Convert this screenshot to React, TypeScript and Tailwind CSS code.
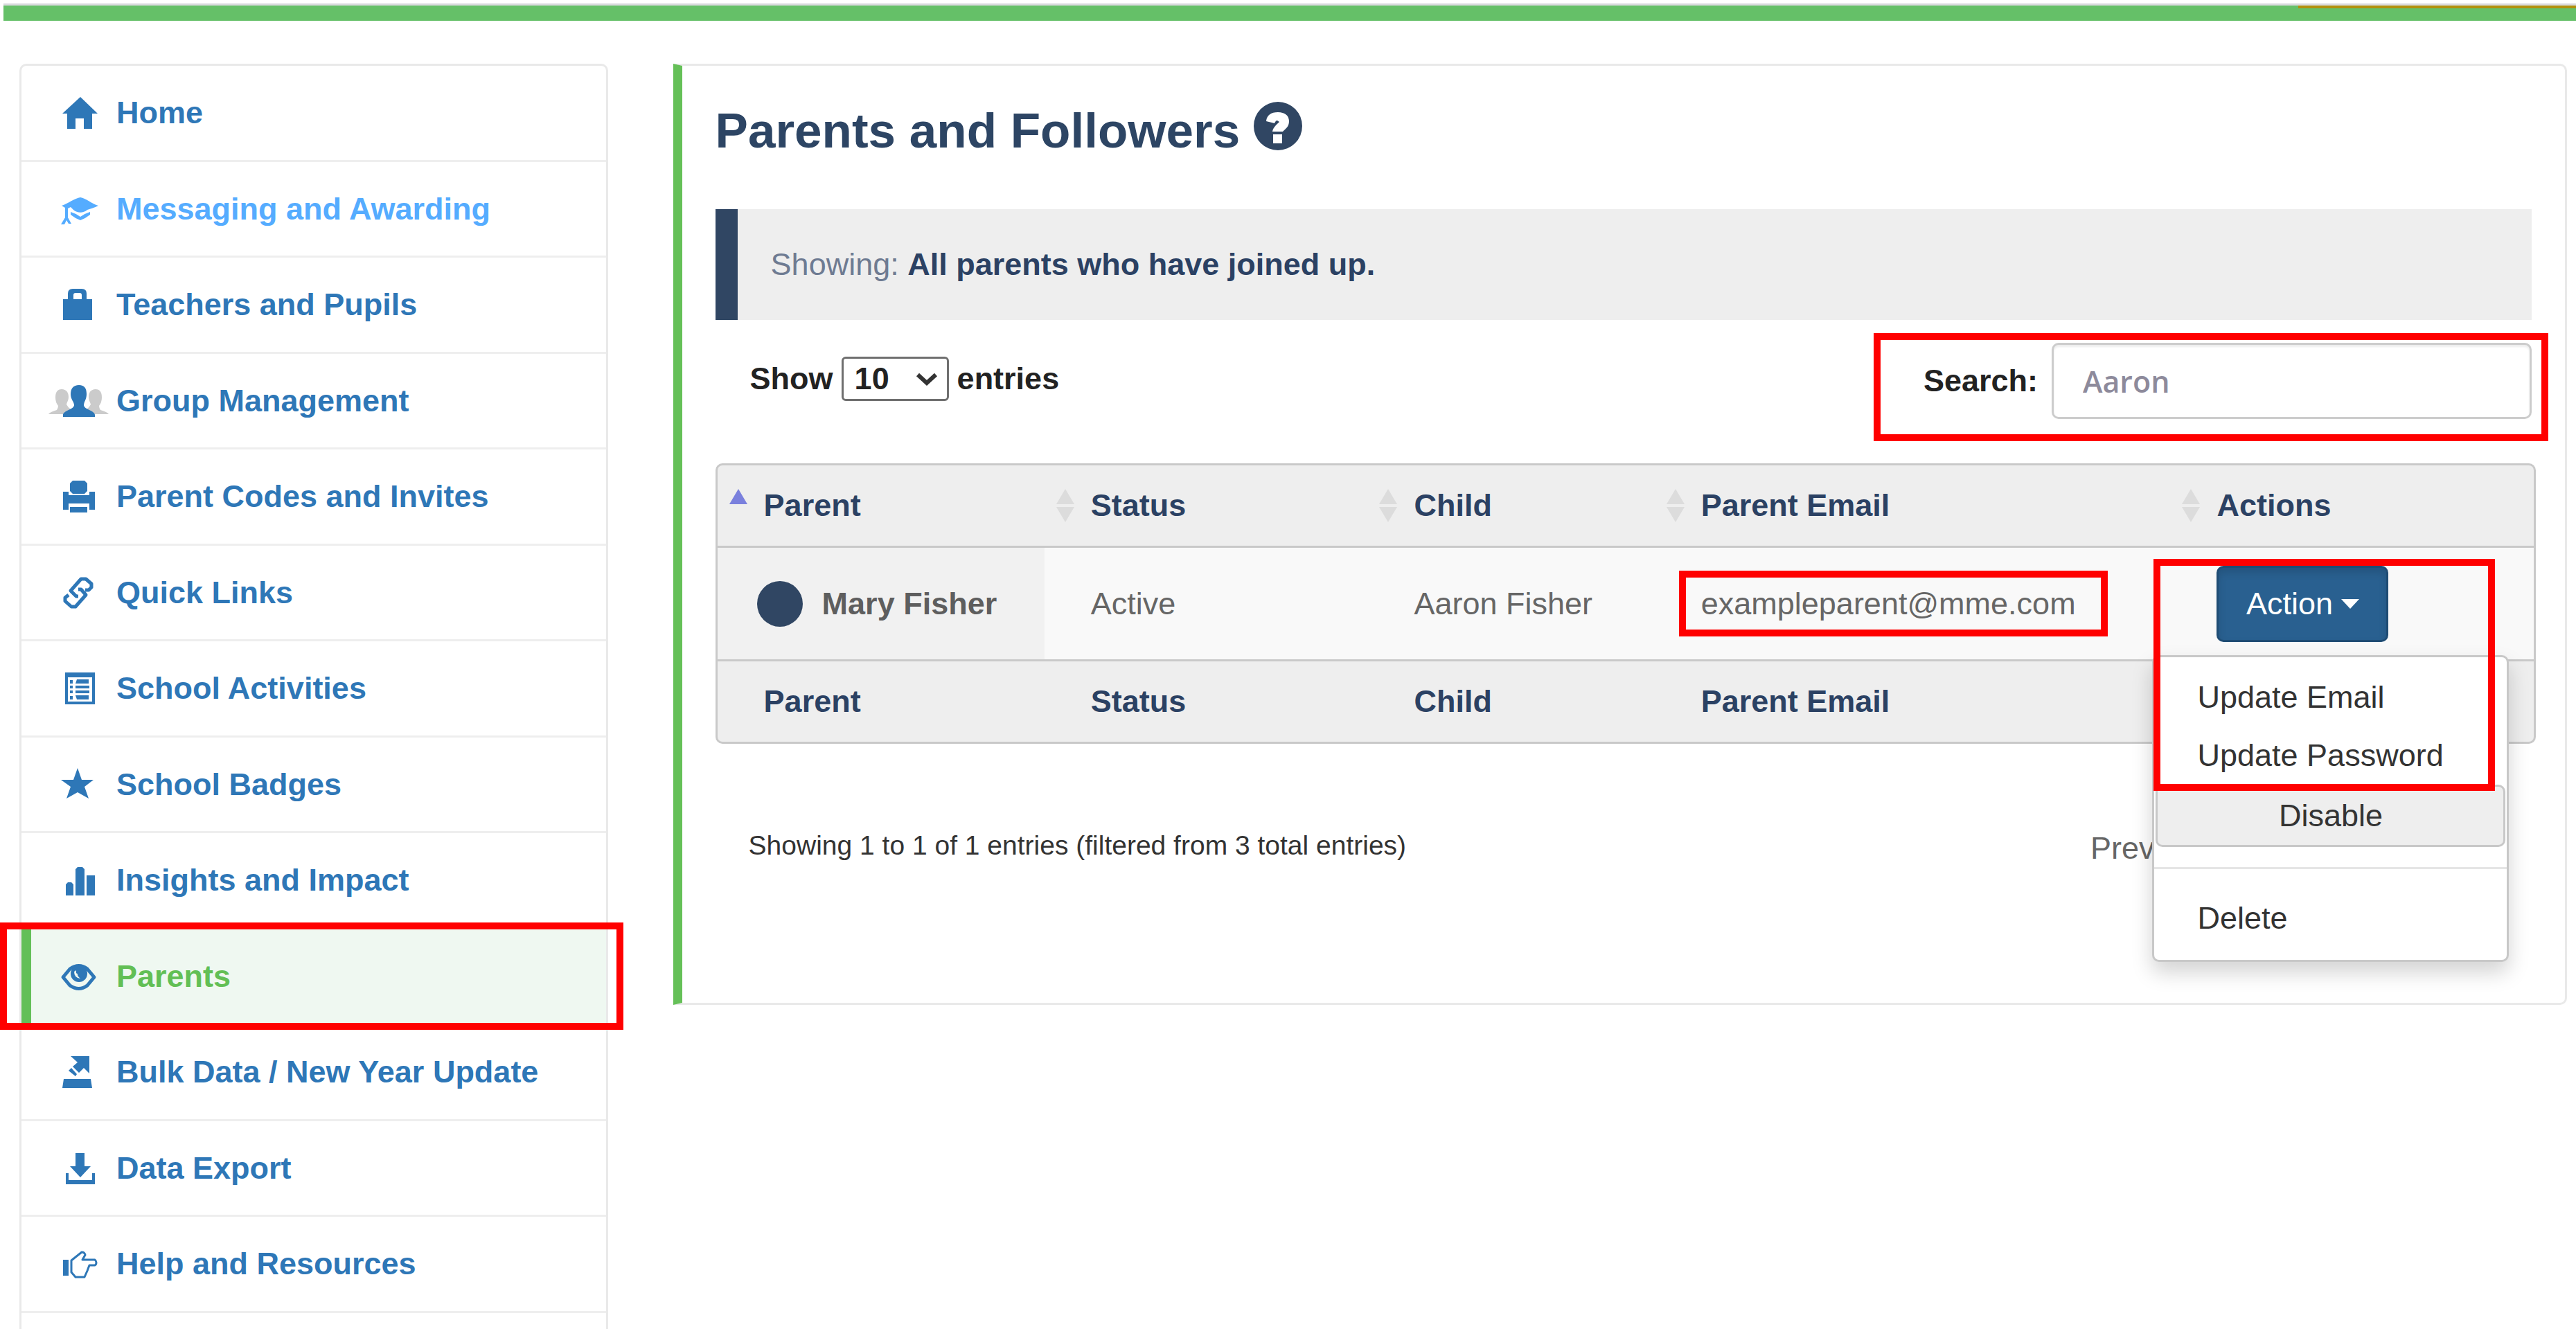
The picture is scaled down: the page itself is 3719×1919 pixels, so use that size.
import type { ReactNode } from "react";

function NavIcon({ children }: { children: ReactNode }) {
  return (
    <svg viewBox="0 0 100 60" className="h-[60px] w-[100px] shrink-0" fill="currentColor" aria-hidden="true">
      {children}
    </svg>
  );
}

const icons = {
  home: <path d="M56 7 81 31H73V53H61V38H49V53H37V31H30Z" />,
  cap: (
    <>
      <path d="M29 25C38 22 48 14 56 13 64 14 72 22 82 25 76 28 71 29 66 31 60 36 52 36 46 31L42 27 38 29V42L43 51H39L36 46 33 52H28L34 42V28Z" />
      <path d="M42 34Q49 36 56 41 63 36 70 34V38Q64 43 56 46 48 43 42 38Z" />
    </>
  ),
  lock: (
    <path
      fillRule="evenodd"
      d="M31 22H38V14Q38 7 45 7H58Q65 7 65 14V22H73V52H31ZM46 22H58V16Q58 13 55 13H49Q46 13 46 16Z"
    />
  ),
  group: (
    <>
      <g fill="#cbcbcb">
        <path d="M29 13C36 13 39 18 39 24 39 29 37 31 36 35Q38 39 42 42L31 49H10Q12 46 22 43 24 40 24 37 20 32 20 25 20 13 29 13Z" />
        <path d="M78 13C71 13 68 18 68 24 68 29 70 31 71 35Q69 39 65 42L76 49H97Q95 46 85 43 83 40 83 37 87 32 87 25 87 13 78 13Z" />
      </g>
      <path d="M54 7C62 7 65 12 65 20 65 28 61 31 61 36 61 42 77 44 77 50V53H31V50C31 44 47 42 47 36 47 31 42 28 42 20 42 12 46 7 54 7Z" />
    </>
  ),
  print: (
    <path d="M45 7H62L66 11V22L62 26H45L41 22V11ZM31 23H39V28H69V23H77V49H69V40H39V49H31ZM41 45H66V53H41Z" />
  ),
  link: (
    <g fill="none" stroke="currentColor" strokeWidth="5" strokeLinejoin="round">
      <path d="M53 35H50L42 27 57 10H64L72 17V22L68 26H63" />
      <path d="M53 25H57L64 33 49 50H43L34 42V37L39 33" />
    </g>
  ),
  list: (
    <path
      fillRule="evenodd"
      d="M34 7H77V53H34ZM38 14V49H73V14ZM41 18H45V23H41ZM41 26H45V30H41ZM41 33H45V37H41ZM41 41H45V46H41ZM51 17H68V23H49ZM49 26H69V30H49ZM49 33H69V37H49ZM49 40H68V46H51Z"
    />
  ),
  star: <path d="M52 6 58 23H75L62 33 68 50 52 41 36 50 42 33 28 23H46Z" />,
  bars: <path d="M38 33H43L46 36V52H35V36ZM52 11H59L62 14V52H49V14ZM65 23H77V52H65Z" />,
  eye: (
    <>
      <path
        d="M31 31 41 19Q54 10 66 19L76 31 66 43Q54 52 41 43Z"
        fill="none"
        stroke="currentColor"
        strokeWidth="5"
        strokeLinejoin="round"
      />
      <circle cx="54" cy="26" r="12" />
      <path d="M47 23Q47 32 56 33 51 29 52 26 49 26 50 21Z" fill="#f0f8f1" />
    </>
  ),
  bulk: <path d="M42 7H69V32L61 24 54 31 45 22 52 16ZM43 24 51 33 49 36 39 28ZM32 40H71L73 53H30Z" />,
  download: <path d="M49 8H62V27H71L56 43 41 27H49ZM35 37H39V47H73V37H77V53H35Z" />,
  hand: (
    <>
      <path d="M31 24H39V47H31Z" />
      <path
        d="M43 25 58 13Q62 13 63 17L59 24H77Q79 26 79 28 79 31 77 32H69L66 40 62 49H49L43 42Z"
        fill="none"
        stroke="currentColor"
        strokeWidth="3"
        strokeLinejoin="round"
      />
    </>
  ),
};

const navItems: { label: string; icon: ReactNode; state?: "light" | "active" }[] = [
  { label: "Home", icon: icons.home },
  { label: "Messaging and Awarding", icon: icons.cap, state: "light" },
  { label: "Teachers and Pupils", icon: icons.lock },
  { label: "Group Management", icon: icons.group },
  { label: "Parent Codes and Invites", icon: icons.print },
  { label: "Quick Links", icon: icons.link },
  { label: "School Activities", icon: icons.list },
  { label: "School Badges", icon: icons.star },
  { label: "Insights and Impact", icon: icons.bars },
  { label: "Parents", icon: icons.eye, state: "active" },
  { label: "Bulk Data / New Year Update", icon: icons.bulk },
  { label: "Data Export", icon: icons.download },
  { label: "Help and Resources", icon: icons.hand },
];

function Sidebar() {
  return (
    <nav className="w-[23.1%] shrink-0 rounded-t-[10px] border-3 border-b-0 border-[#e9e9e9]">
      <ul>
        {navItems.map(({ label, icon, state }) => (
          <li key={label} className="relative border-b-3 border-[#eeeeee] odd:h-[139px] even:h-[138px]">
            <a
              href="#"
              className={
                "flex h-full items-center pl-[29px] text-[45px] leading-[48px] font-bold whitespace-nowrap " +
                (state === "light" ? "text-[#55acff]" : "text-[#2e77b7]") +
                (state === "active" ? " bg-[#eff8f1] shadow-[inset_14px_0_0_#63bf58]" : "")
              }
            >
              <NavIcon>{icon}</NavIcon>
              <span className={state === "active" ? "pl-2 text-[#62bf55]" : "pl-2"}>{label}</span>
            </a>
            {state === "active" && (
              <div className="pointer-events-none absolute -inset-y-[10px] -right-[25px] -left-[31px] border-10 border-[#ff0000]" />
            )}
          </li>
        ))}
      </ul>
    </nav>
  );
}

function SortArrows({ ascending = false }: { ascending?: boolean }) {
  return (
    <svg viewBox="0 0 26 48" className="h-[48px] w-[26px]" aria-hidden="true">
      <path d="M13 0 26 22H0Z" fill={ascending ? "#7a80dd" : "#dcdcdc"} />
      {!ascending && <path d="M13 48 26 26H0Z" fill="#dcdcdc" />}
    </svg>
  );
}

function ActionMenu() {
  return (
    <div className="relative w-[248px]">
      <button
        type="button"
        className="flex h-[110px] w-full items-center justify-center gap-3 rounded-[10px] border-3 border-[#1f4c74] bg-[#296090] text-white shadow-[inset_0_7px_12px_rgba(0,0,0,0.125)]"
      >
        Action
        <svg viewBox="0 0 26 14" className="h-[14px] w-[26px]" fill="currentColor" aria-hidden="true">
          <path d="M0 0H26L13 14Z" />
        </svg>
      </button>
      <div className="absolute top-[129px] -left-[93px] z-10 flex w-[515px] flex-col rounded-[10px] border-3 border-[#c8c8c8] bg-white pt-4 pb-[18px] text-[#333333] shadow-[0_15px_30px_rgba(0,0,0,0.175)]">
        <button type="button" className="h-[84px] pl-[62px] text-left">Update Email</button>
        <button type="button" className="h-[84px] pl-[62px] text-left">Update Password</button>
        <button type="button" className="mx-0.5 h-[90px] rounded-[10px] border-3 border-[#c8c8c8] bg-[#eeeeee]">
          Disable
        </button>
        <hr className="my-[29px] border-t-3 border-[#e5e5e5]" />
        <button type="button" className="h-[84px] pl-[62px] text-left">Delete</button>
      </div>
      <div className="pointer-events-none absolute -top-[10px] -left-[91px] z-20 h-[335px] w-[493px] border-10 border-[#ff0000]" />
    </div>
  );
}

const columns = [
  { label: "Parent", width: "w-[18%]" },
  { label: "Status", width: "w-[17.8%]" },
  { label: "Child", width: "w-[15.8%]" },
  { label: "Parent Email", width: "w-[28.4%]" },
  { label: "Actions", width: "w-[20%]" },
];

function ParentsTable() {
  return (
    <div className="mt-16 rounded-[10px] border-3 border-[#c9c9c9] bg-[#eeeeee]">
      <table className="w-full table-fixed border-separate border-spacing-0 text-left text-[#666666]">
        <thead className="text-[#2b4163]">
          <tr>
            {columns.map(({ label, width }, i) => (
              <th key={label} scope="col" className={`${width} h-[119px] border-b-3 border-[#c9c9c9] pl-[17px]`}>
                <button type="button" className="flex items-center gap-6">
                  <SortArrows ascending={i === 0} />
                  {label}
                </button>
              </th>
            ))}
          </tr>
        </thead>
        <tbody>
          <tr className="bg-[#f9f9f9]">
            <td className="h-[164px] border-b-3 border-[#c9c9c9] bg-[#f1f1f1] pl-[57px]">
              <div className="flex items-center gap-7 font-bold text-[#5e5e5e]">
                <span className="size-[66px] rounded-full bg-[#304663]" />
                Mary Fisher
              </div>
            </td>
            <td className="border-b-3 border-[#c9c9c9] pl-[67px]">Active</td>
            <td className="border-b-3 border-[#c9c9c9] pl-[67px]">Aaron Fisher</td>
            <td className="border-b-3 border-[#c9c9c9] pl-[67px]">
              <span className="relative">
                exampleparent@mme.com
                <span className="pointer-events-none absolute -inset-y-[22px] -right-[46px] -left-[32px] border-10 border-[#ff0000]" />
              </span>
            </td>
            <td className="border-b-3 border-[#c9c9c9] pl-[67px]">
              <ActionMenu />
            </td>
          </tr>
        </tbody>
        <tfoot className="text-[#2b4163]">
          <tr>
            {columns.slice(0, 4).map(({ label }) => (
              <th key={label} scope="col" className="h-[116px] pl-[67px]">
                {label}
              </th>
            ))}
            <td />
          </tr>
        </tfoot>
      </table>
    </div>
  );
}

function Toolbar() {
  return (
    <div className="mt-[33px] mr-1.5 flex items-start justify-between font-bold text-[#222222]">
      <div className="flex items-center gap-3 pt-5 pl-[50px]">
        <label htmlFor="page-size">Show</label>
        <div className="relative">
          <select
            id="page-size"
            defaultValue="10"
            className="h-[64px] w-[155px] appearance-none rounded-[6px] border-3 border-[#6f6f6f] bg-white pl-4 font-bold"
          >
            <option>10</option>
          </select>
          <svg
            viewBox="0 0 32 20"
            className="pointer-events-none absolute top-[23px] right-[16px] h-[20px] w-[32px]"
            fill="none"
            stroke="#333333"
            strokeWidth="6"
            aria-hidden="true"
          >
            <path d="M3 3 16 15 29 3" />
          </svg>
        </div>
        <label htmlFor="page-size">entries</label>
      </div>
      <div className="relative flex items-center gap-5">
        <label htmlFor="search">Search:</label>
        <input
          id="search"
          type="text"
          defaultValue="Aaron"
          className="h-[110px] w-[693px] rounded-[10px] border-3 border-[#cccccc] bg-white pl-[42px] font-['Open_Sans',sans-serif] text-[43px] font-semibold text-[#8d8a9b] shadow-[inset_0_3px_3px_rgba(0,0,0,0.075)]"
        />
        <div className="pointer-events-none absolute -top-[14px] -right-[24px] -bottom-[32px] -left-[72px] border-10 border-[#ff0000]" />
      </div>
    </div>
  );
}

export default function App() {
  return (
    <div className="flex min-h-screen flex-col bg-white font-['Liberation_Sans',Arial,sans-serif] text-[45px] leading-[48px]">
      <header className="mt-[5px] ml-[5px] flex h-[25px] justify-end border-t-3 border-[#d9d9dd] bg-[#65c068]">
        <div className="h-1 w-[401px] bg-[#b1900c]" />
      </header>
      <div className="flex flex-1 items-stretch gap-[94px] pt-[62px] pr-[13px] pl-7">
        <Sidebar />
        <main className="min-w-0 flex-1 self-start rounded-r-[10px] border-3 border-l-13 border-[#e9e9e9] border-l-[#65c058] pt-[52px] pr-[42px] pb-[199px] pl-12">
          <div className="flex items-start gap-5 text-[#2d4564]">
            <h1 className="text-[71px] leading-[84px] font-bold">Parents and Followers</h1>
            <svg viewBox="0 0 70 70" className="size-[70px]" role="img" aria-label="Help">
              <circle cx="35" cy="35" r="35" fill="#304663" />
              <path
                d="M18 28C19 19 25 15 35 15 45 15 51 20 51 28 51 36 46 39 42 43H27C28 37 33 33 37 29L34 27C32 27 31 29 30 31Z"
                fill="#fff"
              />
              <rect x="28" y="47" width="13" height="13" fill="#fff" />
            </svg>
          </div>
          <div className="mt-[71px] mr-1.5 border-l-32 border-[#304663] bg-[#eeeeee] px-12 py-14 text-[#6e7b92]">
            Showing: <strong className="text-[#2b4163]">All parents who have joined up.</strong>
          </div>
          <Toolbar />
          <ParentsTable />
          <div className="mt-[123px] flex items-start justify-between">
            <p className="pl-12 text-[39px] text-[#333333]">Showing 1 to 1 of 1 entries (filtered from 3 total entries)</p>
            <div className="w-[643px] pt-1">
              <button type="button" className="text-[#666666]">Previous</button>
            </div>
          </div>
        </main>
      </div>
    </div>
  );
}
